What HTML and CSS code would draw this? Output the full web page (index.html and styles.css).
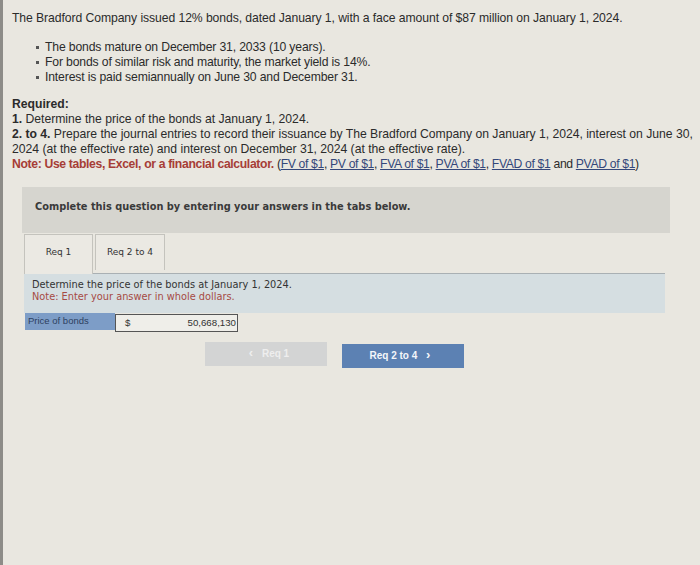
FILE: index.html
```html
<!DOCTYPE html>
<html>
<head>
<meta charset="utf-8">
<link rel="stylesheet" href="styles.css">
</head>
<body>
<div class="page">
  <p class="intro">The Bradford Company issued 12% bonds, dated January 1, with a face amount of $87 million on January 1, 2024.</p>
  <ul class="facts">
    <li>The bonds mature on December 31, 2033 (10 years).</li>
    <li>For bonds of similar risk and maturity, the market yield is 14%.</li>
    <li>Interest is paid semiannually on June 30 and December 31.</li>
  </ul>
  <div class="required">
    <div class="req-head">Required:</div>
    <div><b>1.</b> Determine the price of the bonds at January 1, 2024.</div>
    <div><b>2. to 4.</b> Prepare the journal entries to record their issuance by The Bradford Company on January 1, 2024, interest on June 30, 2024 (at the effective rate) and interest on December 31, 2024 (at the effective rate).</div>
    <div class="note"><b>Note: Use tables, Excel, or a financial calculator.</b> <span class="links">(<a>FV of $1</a>, <a>PV of $1</a>, <a>FVA of $1</a>, <a>PVA of $1</a>, <a>FVAD of $1</a> and <a>PVAD of $1</a>)</span></div>
  </div>
  <div class="complete">Complete this question by entering your answers in the tabs below.</div>
  <div class="tabs">
    <div class="tab active">Req 1</div>
    <div class="tab">Req 2 to 4</div>
  </div>
  <div class="panel">
    <div>Determine the price of the bonds at January 1, 2024.</div>
    <div class="panel-note">Note: Enter your answer in whole dollars.</div>
  </div>
  <div class="answer">
    <div class="label">Price of bonds</div>
    <div class="input"><span class="dollar">$</span><span class="val">50,668,130</span></div>
  </div>
  <div class="nav">
    <div class="btn prev"><span class="chev">&lsaquo;</span> Req 1</div>
    <div class="btn next">Req 2 to 4 <span class="chev">&rsaquo;</span></div>
  </div>
</div>
</body>
</html>
```
FILE: styles.css
```css
html, body {
  margin: 0;
  padding: 0;
  height: 100%;
}
body {
  background: #e9e7e0;
  border-left: 3px solid #8d8c88;
  box-sizing: border-box;
  font-family: "Liberation Sans", Arial, sans-serif;
  color: #2b2b2b;
}
.page {
  padding: 10px 0 0 9px;
}
.intro {
  margin: 0;
  font-size: 12.2px;
  letter-spacing: -0.08px;
  line-height: 16px;
}
.facts {
  margin: 14px 0 0 0;
  padding: 0 0 0 33px;
  font-size: 12.2px;
  letter-spacing: -0.15px;
  line-height: 15px;
  list-style: none;
}
.facts li {
  position: relative;
}
.facts li::before {
  content: "";
  position: absolute;
  left: -9px;
  top: 6px;
  width: 3px;
  height: 3px;
  background: #555;
}
.required {
  margin-top: 12px;
  font-size: 12.2px;
  letter-spacing: -0.02px;
  line-height: 15px;
}
.req-head {
  font-weight: bold;
}
.note {
  letter-spacing: -0.35px;
}
.note b {
  color: #a63d36;
}
.links a {
  color: #34477a;
  text-decoration: underline;
}
.complete {
  margin: 15px 30px 0 10px;
  background: #d6d5cf;
  height: 46px;
  box-sizing: border-box;
  padding: 14px 0 0 13px;
  font-family: "DejaVu Sans", Verdana, sans-serif;
  font-weight: bold;
  font-size: 9.8px;
  color: #3a3a3a;
}
.tabs {
  display: flex;
  margin: 1px 0 0 12px;
  gap: 2px;
  align-items: flex-start;
}
.tab {
  width: 69px;
  height: 36px;
  box-sizing: border-box;
  border: 1px solid #c4c3bd;
  border-bottom: none;
  background: #ebe9e3;
  font-family: "DejaVu Sans", Verdana, sans-serif;
  font-size: 9px;
  color: #333;
  text-align: center;
  padding-top: 12px;
}
.tab.active {
  height: 40px;
}
.tab + .tab {
  width: 70px;
}
.panel {
  margin: -1px 35px 0 12px;
  background: #d5dee1;
  border-top: 1px solid #a9b0b3;
  height: 40px;
  box-sizing: border-box;
  padding: 5px 0 0 8px;
  font-family: "DejaVu Sans", Verdana, sans-serif;
  font-size: 9.8px;
  line-height: 12px;
  color: #333;
}
.panel-note {
  color: #a64a44;
}
.answer {
  display: flex;
  margin: 0 0 0 13px;
  align-items: flex-start;
}
.label {
  width: 90px;
  height: 17px;
  background: #7d9dc7;
  box-sizing: border-box;
  padding: 2px 0 0 3px;
  font-size: 9.5px;
  color: #2e3f60;
}
.input {
  width: 123px;
  height: 18px;
  margin-top: 1px;
  box-sizing: border-box;
  border: 1px solid #555;
  background: #efeee9;
  display: flex;
  justify-content: space-between;
  padding: 2px 1px 0 9px;
  font-size: 9.7px;
  color: #333;
}
.nav {
  display: flex;
  margin: 10px 0 0 193px;
  gap: 15px;
  align-items: flex-start;
}
.btn {
  width: 122px;
  height: 24px;
  box-sizing: border-box;
  text-align: center;
  font-size: 10px;
  font-weight: bold;
  padding-top: 6px;
}
.prev {
  background: #d3d4d4;
  color: #eeeeee;
}
.next {
  background: #5c81b3;
  color: #f4f6fa;
  margin-top: 2px;
}
.chev {
  font-size: 13px;
  margin: 0 6px;
  line-height: 10px;
}
```
